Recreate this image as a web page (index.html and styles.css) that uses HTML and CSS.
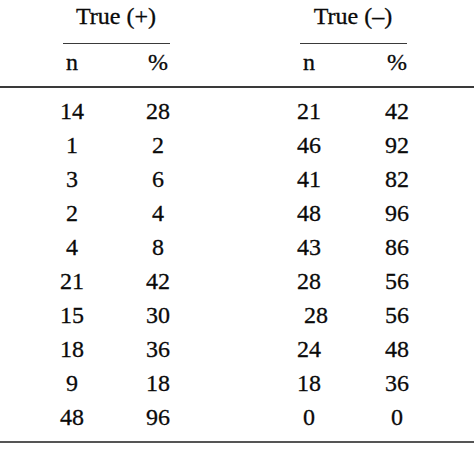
FILE: index.html
```html
<!DOCTYPE html>
<html>
<head>
<meta charset="utf-8">
<link rel="stylesheet" href="styles.css">
</head>
<body>
<div class="table">
  <div class="head">
    <div class="pad"></div>
    <div class="group"><div class="group-label">True (+)</div></div>
    <div class="gap"></div>
    <div class="group"><div class="group-label">True (–)</div></div>
    <div class="pad"></div>
  </div>
  <div class="sub">
    <div></div><div class="c">n</div><div class="c">%</div><div></div><div class="c">n</div><div class="c">%</div><div></div>
  </div>
  <div class="body">
    <div class="row"><div></div><div class="c">14</div><div class="c">28</div><div></div><div class="c">21</div><div class="c">42</div><div></div></div>
    <div class="row"><div></div><div class="c">1</div><div class="c">2</div><div></div><div class="c">46</div><div class="c">92</div><div></div></div>
    <div class="row"><div></div><div class="c">3</div><div class="c">6</div><div></div><div class="c">41</div><div class="c">82</div><div></div></div>
    <div class="row"><div></div><div class="c">2</div><div class="c">4</div><div></div><div class="c">48</div><div class="c">96</div><div></div></div>
    <div class="row"><div></div><div class="c">4</div><div class="c">8</div><div></div><div class="c">43</div><div class="c">86</div><div></div></div>
    <div class="row"><div></div><div class="c">21</div><div class="c">42</div><div></div><div class="c">28</div><div class="c">56</div><div></div></div>
    <div class="row"><div></div><div class="c">15</div><div class="c">30</div><div></div><div class="c nudge">28</div><div class="c">56</div><div></div></div>
    <div class="row"><div></div><div class="c">18</div><div class="c">36</div><div></div><div class="c">24</div><div class="c">48</div><div></div></div>
    <div class="row"><div></div><div class="c">9</div><div class="c">18</div><div></div><div class="c">18</div><div class="c">36</div><div></div></div>
    <div class="row"><div></div><div class="c">48</div><div class="c">96</div><div></div><div class="c">0</div><div class="c">0</div><div></div></div>
  </div>
</div>
</body>
</html>
```

FILE: styles.css
```css
html, body {
  margin: 0;
  padding: 0;
  background: #ffffff;
}
body {
  width: 474px;
  height: 474px;
  overflow: hidden;
  font-family: "Liberation Serif", "Times New Roman", serif;
  font-size: 24px;
  color: #0a0a0a;
  -webkit-text-stroke: 0.3px #0a0a0a;
}
.table {
  width: 474px;
}
.head {
  display: grid;
  grid-template-columns: 30px 172px 63px 176px 33px;
}
.group {
  display: flex;
  justify-content: center;
}
.group-label {
  width: 107px;
  line-height: 32px;
  padding-bottom: 11px;
  border-bottom: 1px solid #3a3a3a;
  text-align: center;
  white-space: nowrap;
}
.sub, .row {
  display: grid;
  grid-template-columns: 30px 84px 88px 63px 88px 88px 33px;
}
.sub {
  line-height: 36px;
  padding-bottom: 6px;
  border-bottom: 2px solid #3a3a3a;
}
.c {
  text-align: center;
}
.body {
  padding-top: 6px;
  padding-bottom: 7px;
  border-bottom: 2px solid #555555;
}
.row {
  line-height: 34px;
}
.nudge {
  padding-left: 14px;
}
```
